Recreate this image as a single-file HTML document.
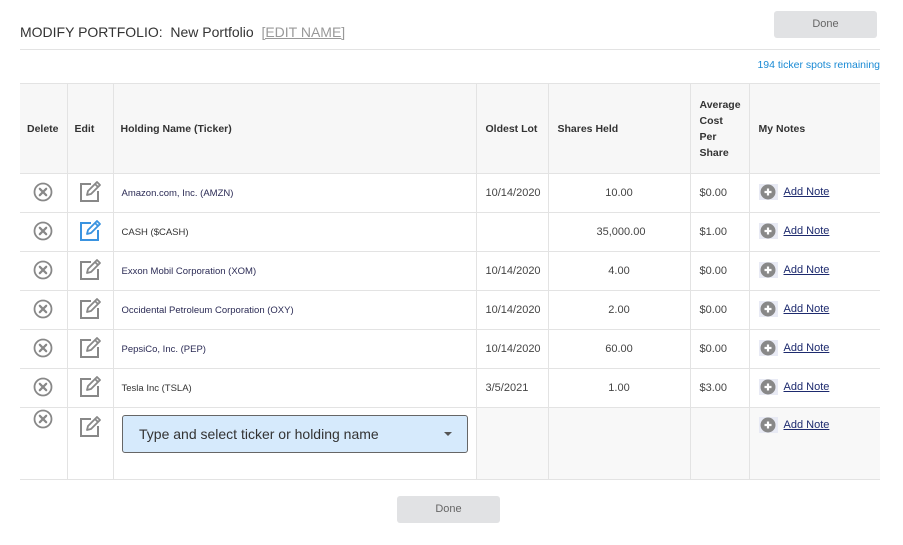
<!DOCTYPE html>
<html><head><style>
body{margin:0;width:903px;height:545px;background:#fff;font-family:"Liberation Sans",Arial,sans-serif;position:relative;overflow:hidden}
.abs{position:absolute}
.btn{position:absolute;background:#e1e2e4;border-radius:3px;color:#666;font-size:11px;text-align:center}
table{position:absolute;left:20px;top:83px;border-collapse:collapse;table-layout:fixed;width:860px}
td,th{border:1px solid #e3e3e3;padding:0;font-size:11px;color:#444;vertical-align:middle}
tr>*:first-child{border-left:none}
tr>*:last-child{border-right:none}
th{background:#f7f7f7;text-align:left;font-weight:bold;color:#333;height:89px;padding-left:7px;font-size:10.5px}
td{height:38px}
.nm{font-size:9.5px;color:#2b2b55;padding-left:8px}
.dt{padding-left:9px}
.sh{text-align:center}
.ac{padding-left:9px}
.nt{padding-left:9px}
.ic{text-align:center}
.an{display:inline-flex;align-items:center}
.an a{color:#1d2a6e;text-decoration:underline;margin-left:6px;font-size:11px}
.plus{width:19px;height:16px;background:#e8eaf4;display:inline-flex;align-items:center;justify-content:center}
tr.last td{background:#f8f8f8;height:62px;vertical-align:top}
</style></head><body>
<div class="abs" style="left:20px;top:24px;font-size:14px;color:#333">MODIFY PORTFOLIO:&nbsp; New Portfolio&nbsp; <span style="color:#999;text-decoration:underline">[EDIT NAME]</span></div>
<div class="btn" style="left:774px;top:11px;width:103px;height:27px;line-height:27px">Done</div>
<div class="abs" style="left:20px;top:49px;width:860px;height:1px;background:#e3e3e3"></div>
<div class="abs" style="right:23px;top:59px;font-size:10.5px;color:#1a8ad4">194 ticker spots remaining</div>
<svg width="0" height="0" style="position:absolute"><defs>
<symbol id="x" viewBox="0 0 20 20"><circle cx="10" cy="10" r="8.5" fill="none" stroke="#888" stroke-width="1.8"/><path d="M6.8 6.8L13.2 13.2M13.2 6.8L6.8 13.2" stroke="#888" stroke-width="2.2" stroke-linecap="round"/></symbol>
<symbol id="e" viewBox="0 0 24 24"><path d="M13 4H3v17h17V11" fill="none" stroke="currentColor" stroke-width="2"/><path d="M9 15l1-4 9-9 3 3-9 9z M17 4l3 3" fill="none" stroke="currentColor" stroke-width="1.8" stroke-linejoin="round"/></symbol>
<symbol id="p" viewBox="0 0 16 16"><circle cx="8" cy="8" r="7.5" fill="#888"/><path d="M8 4.5v7M4.5 8h7" stroke="#fff" stroke-width="2.2"/></symbol>
</defs></svg>
<table>
<colgroup><col style="width:47px"><col style="width:46px"><col style="width:363px"><col style="width:72px"><col style="width:142px"><col style="width:59px"><col style="width:131px"></colgroup>
<tr><th>Delete</th><th>Edit</th><th>Holding Name (Ticker)</th><th style="padding-left:9px">Oldest Lot</th><th style="padding-left:9px">Shares Held</th><th style="padding-left:9px;padding-right:12px;line-height:16px">Average Cost Per Share</th><th style="padding-left:9px">My Notes</th></tr>
<tr><td class="ic"><svg width="20" height="20"><use href="#x"/></svg></td><td class="ic" style="color:#888"><svg width="24" height="24"><use href="#e"/></svg></td><td class="nm">Amazon.com, Inc. (AMZN)</td><td class="dt">10/14/2020</td><td class="sh">10.00</td><td class="ac">$0.00</td><td class="nt"><span class="an"><span class="plus"><svg width="16" height="16"><use href="#p"/></svg></span><a>Add Note</a></span></td></tr>
<tr><td class="ic"><svg width="20" height="20"><use href="#x"/></svg></td><td class="ic" style="color:#3a93e0"><svg width="24" height="24"><use href="#e"/></svg></td><td class="nm" style="color:#333">CASH ($CASH)</td><td class="dt"></td><td style="padding-left:48px;text-align:left">35,000.00</td><td class="ac">$1.00</td><td class="nt"><span class="an"><span class="plus"><svg width="16" height="16"><use href="#p"/></svg></span><a>Add Note</a></span></td></tr>
<tr><td class="ic"><svg width="20" height="20"><use href="#x"/></svg></td><td class="ic" style="color:#888"><svg width="24" height="24"><use href="#e"/></svg></td><td class="nm">Exxon Mobil Corporation (XOM)</td><td class="dt">10/14/2020</td><td class="sh">4.00</td><td class="ac">$0.00</td><td class="nt"><span class="an"><span class="plus"><svg width="16" height="16"><use href="#p"/></svg></span><a>Add Note</a></span></td></tr>
<tr><td class="ic"><svg width="20" height="20"><use href="#x"/></svg></td><td class="ic" style="color:#888"><svg width="24" height="24"><use href="#e"/></svg></td><td class="nm">Occidental Petroleum Corporation (OXY)</td><td class="dt">10/14/2020</td><td class="sh">2.00</td><td class="ac">$0.00</td><td class="nt"><span class="an"><span class="plus"><svg width="16" height="16"><use href="#p"/></svg></span><a>Add Note</a></span></td></tr>
<tr><td class="ic"><svg width="20" height="20"><use href="#x"/></svg></td><td class="ic" style="color:#888"><svg width="24" height="24"><use href="#e"/></svg></td><td class="nm">PepsiCo, Inc. (PEP)</td><td class="dt">10/14/2020</td><td class="sh">60.00</td><td class="ac">$0.00</td><td class="nt"><span class="an"><span class="plus"><svg width="16" height="16"><use href="#p"/></svg></span><a>Add Note</a></span></td></tr>
<tr><td class="ic"><svg width="20" height="20"><use href="#x"/></svg></td><td class="ic" style="color:#888"><svg width="24" height="24"><use href="#e"/></svg></td><td class="nm" style="color:#333">Tesla Inc (TSLA)</td><td class="dt">3/5/2021</td><td class="sh">1.00</td><td class="ac">$3.00</td><td class="nt"><span class="an"><span class="plus"><svg width="16" height="16"><use href="#p"/></svg></span><a>Add Note</a></span></td></tr>
<tr class="last"><td class="ic" style="background:#fff;padding-top:1px"><svg width="20" height="20"><use href="#x"/></svg></td><td class="ic" style="background:#fff;color:#888;padding-top:7px"><svg width="24" height="24"><use href="#e"/></svg></td><td style="background:#fff"></td><td></td><td></td><td></td><td class="nt" style="padding-top:9px"><span class="an"><span class="plus"><svg width="16" height="16"><use href="#p"/></svg></span><a>Add Note</a></span></td></tr>
</table>
<div class="abs" style="left:122px;top:415px;width:344px;height:36px;background:#d6eafc;border:1px solid #666;border-radius:3px;font-size:14px;color:#333;line-height:36px;text-indent:16px">Type and select ticker or holding name
<span style="position:absolute;right:15px;top:16px;width:0;height:0;border-left:4px solid transparent;border-right:4px solid transparent;border-top:4px solid #555"></span></div>
<div class="btn" style="left:397px;top:496px;width:103px;height:27px;line-height:27px">Done</div>
</body></html>
